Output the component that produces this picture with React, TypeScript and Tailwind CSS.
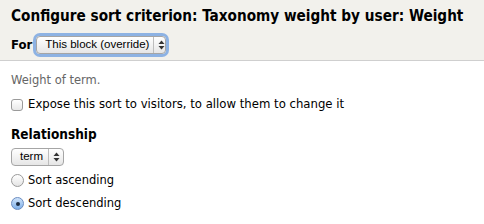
function MacSelect({ label, focused, className }: { label: string; focused?: boolean; className?: string }) {
    return (
        <div
            className={`flex items-center h-[18px] rounded-[4px] border border-[#a5a5a5] bg-gradient-to-b from-white to-[#e6e6e6] font-['Liberation_Sans',sans-serif] text-[11.5px] text-black overflow-hidden ${focused ? 'shadow-[0_0_0_3px_#8db2e3]' : ''} ${className ?? ''}`}
        >
            <span className="flex-1 pl-[8px] pr-[4px] leading-none whitespace-nowrap">{label}</span>
            <span className="flex items-center justify-center w-[15px] shrink-0 h-full border-l border-[#bdbdbd]">
                <svg width="7" height="10" viewBox="0 0 7 10">
                    <path d="M3.5 0.5 L6.5 4 H0.5 Z" fill="#333" />
                    <path d="M3.5 9.5 L6.5 6 H0.5 Z" fill="#333" />
                </svg>
            </span>
        </div>
    );
}

export default function App() {
    return (
        <div className="w-[484px] h-[224px] bg-white overflow-hidden font-['DejaVu_Sans',sans-serif] text-black">
            {/* header */}
            <header className="h-[61px] bg-[#f2f1ec] border-b border-[#cfcfcf] px-[11px] pt-[5px]">
                <h1 className="font-['DejaVu_Sans_Condensed','DejaVu_Sans',sans-serif] text-[15.2px] font-bold leading-[22px] whitespace-nowrap">
                    Configure sort criterion: Taxonomy weight by user: Weight
                </h1>
                <div className="flex items-center gap-[4px] mt-[8px]">
                    <span className="font-['DejaVu_Sans_Condensed','DejaVu_Sans',sans-serif] text-[13px] font-bold">For</span>
                    <MacSelect label="This block (override)" focused className="w-[130px]" />
                </div>
            </header>

            <main className="px-[11px] pt-[12px]">
                <p className="text-[11.5px] text-[#666] leading-[15px]">Weight of term.</p>

                <label className="flex items-center gap-[5px] mt-[9px] text-[11.7px] leading-[15px]">
                    <span className="w-[12px] h-[12px] rounded-[3px] border border-[#9a9a9a] bg-gradient-to-b from-white to-[#e8e8e8]" />
                    Expose this sort to visitors, to allow them to change it
                </label>

                <h2 className="font-['DejaVu_Sans_Condensed','DejaVu_Sans',sans-serif] text-[13.5px] font-bold mt-[14px] leading-[16px]">Relationship</h2>
                <MacSelect label="term" className="w-[53px] mt-[6px]" />

                <label className="flex items-center gap-[4px] mt-[7px] text-[11.5px] leading-[15px]">
                    <span className="w-[13px] h-[13px] rounded-full border border-[#9a9a9a] bg-gradient-to-b from-white to-[#e4e4e4]" />
                    Sort ascending
                </label>
                <label className="flex items-center gap-[4px] mt-[8px] text-[11.5px] leading-[15px]">
                    <span className="w-[13px] h-[13px] rounded-full border border-[#6a8cc0] bg-gradient-to-b from-[#cfe3fa] to-[#7fb0e8] flex items-center justify-center">
                        <span className="w-[4px] h-[4px] rounded-full bg-[#1a2a40]" />
                    </span>
                    Sort descending
                </label>
            </main>
        </div>
    );
}
